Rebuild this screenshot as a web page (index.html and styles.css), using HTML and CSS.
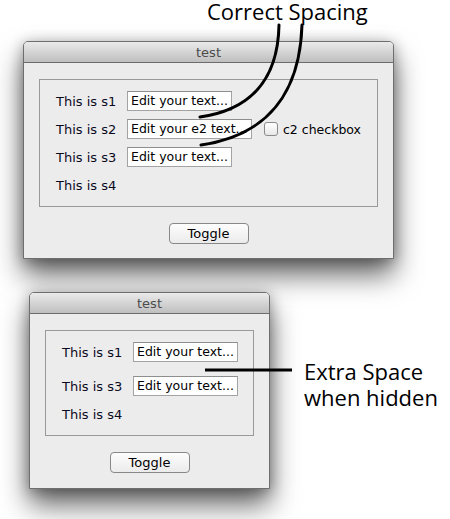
FILE: index.html
```html
<!DOCTYPE html>
<html>
<head>
<meta charset="utf-8">
<link rel="stylesheet" href="styles.css">
</head>
<body>
<div class="stage">
  <div class="win win1">
    <div class="titlebar">test</div>
    <div class="content">
      <div class="group">
        <div class="row"><span class="lbl">This is s1</span><span class="field f-short">Edit your text...</span></div>
        <div class="row"><span class="lbl">This is s2</span><span class="field f-long">Edit your e2 text...</span><span class="check"></span><span class="check-lbl">c2 checkbox</span></div>
        <div class="row"><span class="lbl">This is s3</span><span class="field f-short">Edit your text...</span></div>
        <div class="row"><span class="lbl">This is s4</span></div>
      </div>
      <div class="btn-row"><span class="btn">Toggle</span></div>
    </div>
  </div>

  <div class="win win2">
    <div class="titlebar">test</div>
    <div class="content">
      <div class="group">
        <div class="row"><span class="lbl">This is s1</span><span class="field f-short">Edit your text...</span></div>
        <div class="gap-hidden"></div>
        <div class="row"><span class="lbl">This is s3</span><span class="field f-short">Edit your text...</span></div>
        <div class="row"><span class="lbl">This is s4</span></div>
      </div>
      <div class="btn-row"><span class="btn">Toggle</span></div>
    </div>
  </div>

  <svg class="marks" width="450" height="519" viewBox="0 0 450 519">
    <path d="M279,25 C278,80 250,110 200,117" fill="none" stroke="#000" stroke-width="3" stroke-linecap="round"/>
    <path d="M302,25 C300,90 270,135 201,145" fill="none" stroke="#000" stroke-width="3" stroke-linecap="round"/>
    <path d="M205,370 L292,370" fill="none" stroke="#000" stroke-width="3"/>
  </svg>

  <div class="note note-top">Correct Spacing</div>
  <div class="note note-side">Extra Space<br>when hidden</div>
</div>
</body>
</html>
```

FILE: styles.css
```css
* { box-sizing: border-box; }
html, body { margin: 0; padding: 0; background: #fff; }
.stage {
  position: relative;
  width: 450px;
  height: 519px;
  overflow: hidden;
  font-family: "DejaVu Sans", "Liberation Sans", sans-serif;
  font-size: 13px;
  color: #000;
}
.win {
  position: absolute;
  background: #ececec;
  border: 1px solid #6e6e6e;
  border-radius: 5px 5px 0 0;
  box-shadow: 0 16px 28px rgba(0,0,0,0.6), 0 2px 14px rgba(0,0,0,0.3);
}
.win1 { left: 23px; top: 41px; width: 371px; height: 218px; }
.win2 { left: 29px; top: 292px; width: 241px; height: 197px; }
.titlebar {
  height: 21px;
  line-height: 21px;
  border-bottom: 1px solid #6c6c6c;
  border-radius: 4px 4px 0 0;
  background: linear-gradient(#eaeaea, #bfbfbf);
  text-align: center;
  color: #4b4b4b;
}
.content { padding: 16px 15px 0 15px; }
.group {
  border: 1px solid #999;
  padding: 7px 16px;
  display: flex;
  flex-direction: column;
}
.row {
  display: flex;
  align-items: center;
  height: 28px;
}
.lbl { width: 71px; flex: none; white-space: nowrap; color: #0a0a1e; }
.field {
  flex: none;
  height: 20px;
  line-height: 18px;
  background: #fff;
  border: 1px solid #a3a3a3;
  border-top-color: #8e8e8e;
  padding: 0 3px;
  white-space: nowrap;
  overflow: hidden;
  font-size: 12.5px;
}
.f-short { width: 105px; }
.f-long { width: 125px; }
.check {
  flex: none;
  width: 14px;
  height: 14px;
  margin-left: 12px;
  border: 1px solid #8a8a8a;
  border-radius: 3px;
  background: linear-gradient(#fff, #e8e8e8);
}
.check-lbl { margin-left: 5px; white-space: nowrap; font-size: 12.5px; }
.gap-hidden { height: 6px; }
.btn-row {
  display: flex;
  justify-content: center;
  margin-top: 16px;
}
.btn {
  width: 80px;
  height: 21px;
  line-height: 19px;
  text-align: center;
  border: 1px solid #888;
  border-radius: 4px;
  background: linear-gradient(#fdfdfd, #ebebeb);
}
.marks { position: absolute; left: 0; top: 0; }
.note {
  position: absolute;
  font-family: "Open Sans", "Noto Sans", sans-serif;
  font-size: 22px;
  line-height: 26px;
  color: #000;
  white-space: nowrap;
}
.note-top { left: 207px; top: 0; line-height: 22px; }
.note-side { left: 304px; top: 358px; }
```
